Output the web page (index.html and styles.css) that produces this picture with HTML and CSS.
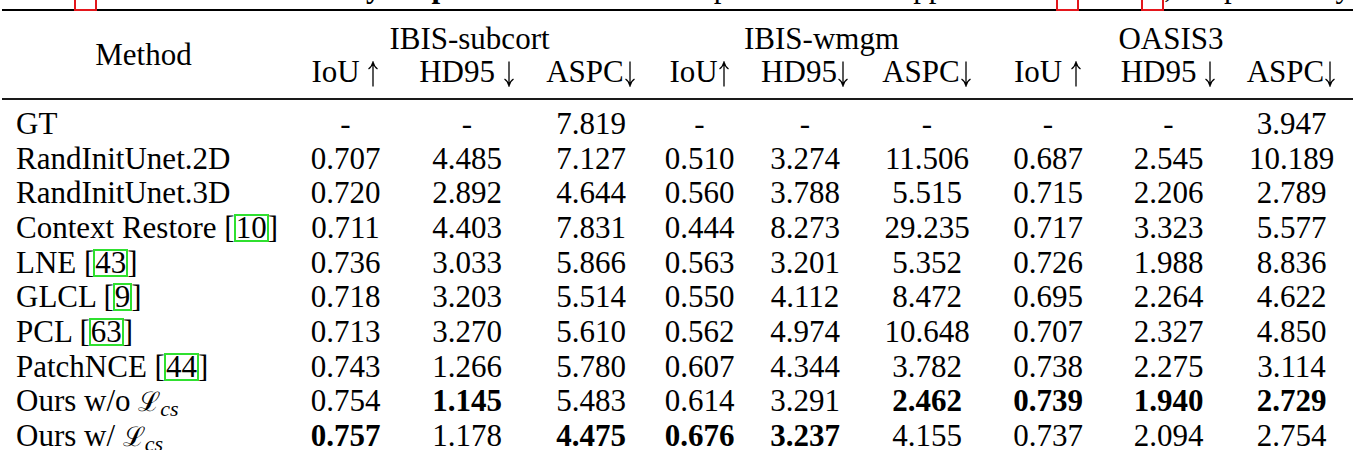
FILE: index.html
```html
<!DOCTYPE html>
<html lang="en">
<head>
  <meta charset="UTF-8" />
  <title>Segmentation results</title>
  <link rel="stylesheet" href="styles.css">
</head>
<body>

  <div class="page">
    <!-- tail of the caption line, cut off by the crop -->
    <div class="caption">
      <span class="ref-box box-a"></span>
      <span class="frag bold gap-1">y</span>
      <span class="frag bold gap-2">p</span>
      <span class="frag gap-3">p</span>
      <span class="frag gap-4">pp</span>
      <span class="ref-box box-b"></span>
      <span class="ref-box box-c"></span>
      <span class="frag comma">,</span>
      <span class="frag gap-5">p</span>
      <span class="frag gap-6">y</span>
    </div>

    <div class="head">
      <div class="method">Method</div>
      <div class="group">IBIS-subcort</div>
      <div class="group">IBIS-wmgm</div>
      <div class="group">OASIS3</div>
      <div>IoU <svg class="arrow" viewBox="0 0 12 26"><path d="M6 25.5V1.5M1.5 8C3.8 6.6 5.2 4.2 6 1.2C6.8 4.2 8.2 6.6 10.5 8"/></svg></div>
      <div>HD95 <svg class="arrow" viewBox="0 0 12 26"><path d="M6 0.5V24.5M1.5 18C3.8 19.4 5.2 21.8 6 24.8C6.8 21.8 8.2 19.4 10.5 18"/></svg></div>
      <div>ASPC<svg class="arrow" viewBox="0 0 12 26"><path d="M6 0.5V24.5M1.5 18C3.8 19.4 5.2 21.8 6 24.8C6.8 21.8 8.2 19.4 10.5 18"/></svg></div>
      <div>IoU<svg class="arrow" viewBox="0 0 12 26"><path d="M6 25.5V1.5M1.5 8C3.8 6.6 5.2 4.2 6 1.2C6.8 4.2 8.2 6.6 10.5 8"/></svg></div>
      <div>HD95<svg class="arrow" viewBox="0 0 12 26"><path d="M6 0.5V24.5M1.5 18C3.8 19.4 5.2 21.8 6 24.8C6.8 21.8 8.2 19.4 10.5 18"/></svg></div>
      <div>ASPC<svg class="arrow" viewBox="0 0 12 26"><path d="M6 0.5V24.5M1.5 18C3.8 19.4 5.2 21.8 6 24.8C6.8 21.8 8.2 19.4 10.5 18"/></svg></div>
      <div>IoU <svg class="arrow" viewBox="0 0 12 26"><path d="M6 25.5V1.5M1.5 8C3.8 6.6 5.2 4.2 6 1.2C6.8 4.2 8.2 6.6 10.5 8"/></svg></div>
      <div>HD95 <svg class="arrow" viewBox="0 0 12 26"><path d="M6 0.5V24.5M1.5 18C3.8 19.4 5.2 21.8 6 24.8C6.8 21.8 8.2 19.4 10.5 18"/></svg></div>
      <div>ASPC<svg class="arrow" viewBox="0 0 12 26"><path d="M6 0.5V24.5M1.5 18C3.8 19.4 5.2 21.8 6 24.8C6.8 21.8 8.2 19.4 10.5 18"/></svg></div>
    </div>

    <div class="rows">
      <div class="row">
        <div class="name">GT</div>
        <div>-</div><div>-</div><div>7.819</div>
        <div>-</div><div>-</div><div>-</div>
        <div>-</div><div>-</div><div>3.947</div>
      </div>
      <div class="row">
        <div class="name">RandInitUnet.2D</div>
        <div>0.707</div><div>4.485</div><div>7.127</div>
        <div>0.510</div><div>3.274</div><div>11.506</div>
        <div>0.687</div><div>2.545</div><div>10.189</div>
      </div>
      <div class="row">
        <div class="name">RandInitUnet.3D</div>
        <div>0.720</div><div>2.892</div><div>4.644</div>
        <div>0.560</div><div>3.788</div><div>5.515</div>
        <div>0.715</div><div>2.206</div><div>2.789</div>
      </div>
      <div class="row">
        <div class="name">Context Restore [<span class="cite">10</span>]</div>
        <div>0.711</div><div>4.403</div><div>7.831</div>
        <div>0.444</div><div>8.273</div><div>29.235</div>
        <div>0.717</div><div>3.323</div><div>5.577</div>
      </div>
      <div class="row">
        <div class="name">LNE [<span class="cite">43</span>]</div>
        <div>0.736</div><div>3.033</div><div>5.866</div>
        <div>0.563</div><div>3.201</div><div>5.352</div>
        <div>0.726</div><div>1.988</div><div>8.836</div>
      </div>
      <div class="row">
        <div class="name">GLCL [<span class="cite">9</span>]</div>
        <div>0.718</div><div>3.203</div><div>5.514</div>
        <div>0.550</div><div>4.112</div><div>8.472</div>
        <div>0.695</div><div>2.264</div><div>4.622</div>
      </div>
      <div class="row">
        <div class="name">PCL [<span class="cite">63</span>]</div>
        <div>0.713</div><div>3.270</div><div>5.610</div>
        <div>0.562</div><div>4.974</div><div>10.648</div>
        <div>0.707</div><div>2.327</div><div>4.850</div>
      </div>
      <div class="row">
        <div class="name">PatchNCE [<span class="cite">44</span>]</div>
        <div>0.743</div><div>1.266</div><div>5.780</div>
        <div>0.607</div><div>4.344</div><div>3.782</div>
        <div>0.738</div><div>2.275</div><div>3.114</div>
      </div>
      <div class="row">
        <div class="name">Ours w/o <span class="math">ℒ</span><sub class="sub">cs</sub></div>
        <div>0.754</div><div class="bold">1.145</div><div>5.483</div>
        <div>0.614</div><div>3.291</div><div class="bold">2.462</div>
        <div class="bold">0.739</div><div class="bold">1.940</div><div class="bold">2.729</div>
      </div>
      <div class="row">
        <div class="name">Ours w/ <span class="math">ℒ</span><sub class="sub">cs</sub></div>
        <div class="bold">0.757</div><div>1.178</div><div class="bold">4.475</div>
        <div class="bold">0.676</div><div class="bold">3.237</div><div>4.155</div>
        <div>0.737</div><div>2.094</div><div>2.754</div>
      </div>
    </div>
  </div>

</body>
</html>
```

FILE: styles.css
```css
* {
  margin: 0;
  padding: 0;
  box-sizing: border-box;
}

body {
  background-color: #ffffff;
  color: #000000;
  font-family: "Liberation Serif", "Times New Roman", serif;
  font-size: 31px;
  overflow: hidden;
}

.page {
  --cols: 283px 121px 122px 126px 91px 120px 124px 118px 123px 123px;
  margin: 0 4px 0 2px;
  width: 1351px;
}

.bold {
  font-weight: bold;
}

/* cropped caption + top rule */
.caption {
  display: flex;
  align-items: flex-start;
  height: 11px;
  overflow: hidden;
  background: linear-gradient(#000, #000) bottom / 100% 2px no-repeat;
}

.frag {
  line-height: 31px;
  margin-top: -29px;
}

.ref-box {
  width: 23px;
  height: 20px;
  margin-top: -9px;
  border: 2px solid #e3161b;
}

.box-a { margin-left: 72px; }
.gap-1 { margin-left: 269px; }
.gap-2 { margin-left: 50px; }
.gap-3 { margin-left: 265px; }
.gap-4 { margin-left: 184px; }
.box-b { margin-left: 112px; }
.box-c { margin-left: 62px; }
.gap-5 { margin-left: 52px; }
.gap-6 { margin-left: 96px; }

/* header */
.head {
  display: grid;
  grid-template-columns: var(--cols);
  grid-template-rows: 33px 33px;
  line-height: 33px;
  text-align: center;
  white-space: nowrap;
  padding: 10.5px 0 10px;
  border-bottom: 2px solid #1a1a1a;
}

.method {
  grid-row: 1 / 3;
  align-self: center;
}

.group {
  grid-column: span 3;
}

.arrow {
  width: 12px;
  height: 26px;
  vertical-align: -5px;
}

.arrow path {
  fill: none;
  stroke: #000;
  stroke-width: 1.3;
}

/* body rows */
.rows {
  padding-top: 7.5px;
}

.row {
  display: grid;
  grid-template-columns: var(--cols);
  height: 34.67px;
  line-height: 34.67px;
  text-align: center;
  white-space: nowrap;
}

.row .name {
  text-align: left;
  padding-left: 14px;
}

.cite {
  display: inline-block;
  line-height: 24px;
  border: 2px solid #2fe02f;
  margin: 0 -1px;
}

.math {
  font-family: "DejaVu Serif", serif;
  font-size: 27px;
}

.sub {
  font-style: italic;
  font-size: 22px;
  vertical-align: -5px;
  line-height: 0;
}
```
